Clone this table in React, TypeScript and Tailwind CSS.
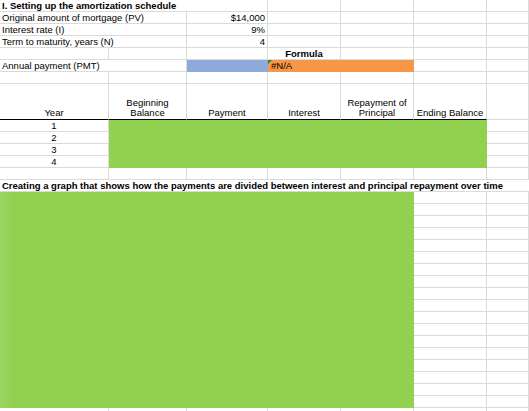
import React from 'react';

const cellBase = 'border-r border-b border-[#dadada] leading-[11px] whitespace-nowrap';

function C({ className = '', children }: { className?: string; children?: React.ReactNode }) {
  return <div className={`${cellBase} ${className}`}>{children}</div>;
}

function Blank({ n }: { n: number }) {
  return (
    <>
      {Array.from({ length: n }).map((_, i) => (
        <C key={i} />
      ))}
    </>
  );
}

const inputs = [
  { label: 'Original amount of mortgage (PV)', value: '$14,000' },
  { label: 'Interest rate (I)', value: '9%' },
  { label: 'Term to maturity, years (N)', value: '4' },
];

const headers = [
  { text: 'Year' },
  { text: 'Beginning', sub: 'Balance' },
  { text: 'Payment' },
  { text: 'Interest' },
  { text: 'Repayment of', sub: 'Principal' },
  { text: 'Ending Balance' },
];

export default function App() {
  return (
    <div className="w-[529px] h-[411px] overflow-hidden bg-white text-black text-[9.5px] font-['Liberation_Sans',Arial,sans-serif]">
      <div className="grid grid-cols-[109px_78px_81px_73px_73px_73px_1fr] grid-rows-[repeat(7,12px)_36px_repeat(25,12px)]">
        {/* Section title */}
        <C className="col-span-3 pl-[2px] font-bold">I. Setting up the amortization schedule</C>
        <Blank n={4} />

        {/* Inputs */}
        {inputs.map((r) => (
          <React.Fragment key={r.label}>
            <C className="col-span-2 pl-[2px]">{r.label}</C>
            <C className="text-right pr-[2px]">{r.value}</C>
            <Blank n={4} />
          </React.Fragment>
        ))}

        <Blank n={3} />
        <C className="text-center font-bold">Formula</C>
        <Blank n={3} />

        <C className="col-span-2 pl-[2px]">Annual payment (PMT)</C>
        <div className="bg-[#8eaadb]" />
        <div className="relative col-span-2 bg-[#f79646] pl-[3px] leading-[11px]">
          <svg className="absolute left-0 top-0" width="4" height="4" viewBox="0 0 4 4">
            <polygon points="0,0 4,0 0,4" fill="#1b8a2a" />
          </svg>
          #N/A
        </div>
        <Blank n={2} />

        <Blank n={7} />

        {/* Table header */}
        {headers.map((h) => (
          <div
            key={h.text}
            className="border-r border-[#dadada] border-b border-b-black flex flex-col items-center justify-end pb-px leading-[10px] whitespace-nowrap"
          >
            <span>{h.text}</span>
            {h.sub && <span>{h.sub}</span>}
          </div>
        ))}
        <C />

        {/* Years */}
        {[1, 2, 3, 4].map((y) => (
          <React.Fragment key={y}>
            <C className="text-center">{y}</C>
            {y === 1 && <div className="col-span-5 row-span-4 bg-[#92d050]" />}
            <C />
          </React.Fragment>
        ))}

        <Blank n={7} />

        <div className="col-span-7 border-b border-[#dadada] pl-[2px] font-bold leading-[11px] whitespace-nowrap">
          Creating a graph that shows how the payments are divided between interest and principal repayment over time
        </div>

        {/* Chart area */}
        {Array.from({ length: 18 }).map((_, i) => (
          <React.Fragment key={i}>
            {i === 0 && (
              <div className="col-span-5 row-span-[18] bg-[linear-gradient(to_right,#9dd564,#92d050_12px)]" />
            )}
            <C />
            <C />
          </React.Fragment>
        ))}

        <Blank n={7} />
      </div>
    </div>
  );
}
